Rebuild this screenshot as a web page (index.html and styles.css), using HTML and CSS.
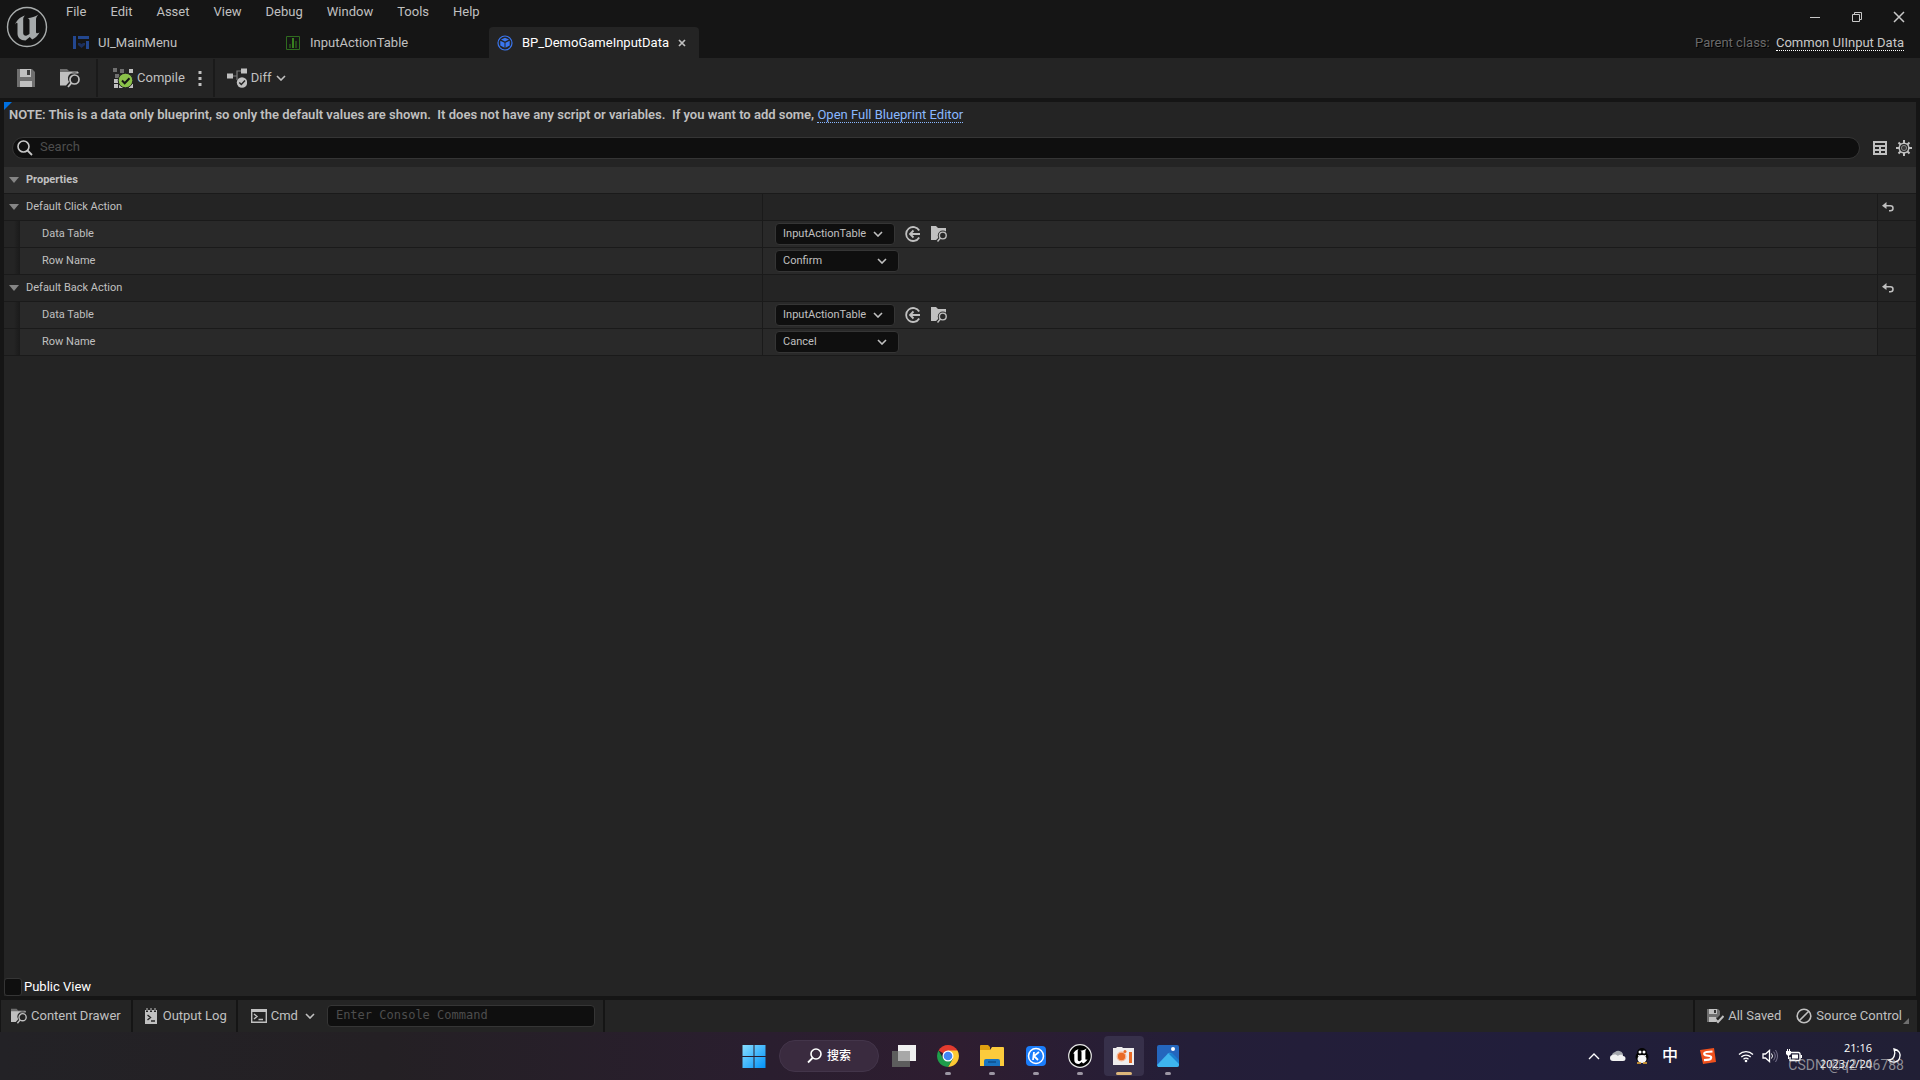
FILE: index.html
```html
<!DOCTYPE html>
<html lang="en">
<head>
  <meta charset="UTF-8">
  <meta name="viewport" content="width=device-width, initial-scale=1.0">
  <title>BP_DemoGameInputData</title>
  <link rel="stylesheet" href="styles.css">
</head>
<body>
  <!-- Shared icons -->
  <svg class="sprite" aria-hidden="true">
    <symbol id="chevron" viewBox="0 0 10 6"><path d="M1 1l4 4 4-4" fill="none" stroke="currentColor" stroke-width="1.6"/></symbol>
    <symbol id="browse" viewBox="0 0 20 20">
      <path d="M0 1h7l2 2h9v3H0z" fill="#6f6f6f"/>
      <path d="M0 4h18.500v1.500a6.500 6.500 0 0 0-9.500 8.500L6 17.500H0z" fill="#c0c0c0"/>
      <circle cx="14.500" cy="11.500" r="4.500" fill="none" stroke="#c0c0c0" stroke-width="1.700"/>
      <path d="M11.500 14.800L8 19" stroke="#c0c0c0" stroke-width="1.800"/>
    </symbol>
    <symbol id="browse-flat" viewBox="0 0 16 16">
      <path d="M0 0h5l2 2h8v12H0z" fill="#c0c0c0"/>
      <path d="M9.500 12.500L6 16" stroke="#292929" stroke-width="4"/>
      <circle cx="11.800" cy="9.500" r="5" fill="#292929"/>
      <path d="M12 12h4v4H8z" fill="#292929"/>
      <circle cx="11.800" cy="9.500" r="3.400" fill="none" stroke="#c0c0c0" stroke-width="1.400"/>
      <path d="M9.500 12L6.500 15.500" stroke="#c0c0c0" stroke-width="1.500"/>
    </symbol>
    <symbol id="use-asset" viewBox="0 0 16 16">
      <path d="M14.200 4.500a7 7 0 1 0 0 7M15 8H5M8.500 4.500L5 8l3.500 3.500" fill="none" stroke="#c0c0c0" stroke-width="1.800"/>
    </symbol>
    <symbol id="undo" viewBox="0 0 12 10">
      <path d="M4.500 0L0 3.800l4.500 3.200z" fill="#c0c0c0"/>
      <path d="M2 3.700h6.500a2.400 2.400 0 0 1 0 5H7" fill="none" stroke="#c0c0c0" stroke-width="1.500"/>
    </symbol>
    <symbol id="unreal-u" viewBox="0 0 40 40">
      <path d="M8 17.500C10 12.500 14 9.500 18 8.500c-1.500 1.300-1.800 2.500-1.800 4V26c0 1.800 1.200 2.700 2.700 2.700 1.300 0 2.500-.8 3.600-1.900V13.500c0-1.300-.6-2-2-2.300 4-.4 7.800-1.500 11-3.700-1.700 1.800-2.500 3.200-2.500 5.200V25c0 1.500 1.600 1.600 3.500.4-1.800 3.500-4.200 5.600-7.300 7L22.800 30l-4.300 3.500c-5.200-.2-8-2.900-8-7V17c0-1.600-1-1.600-2.500.5z"/>
    </symbol>
  </svg>

  <div class="editor">
    <header class="titlebar">
      <div class="logo">
        <svg width="42" height="42" viewBox="0 0 42 42">
          <circle cx="21" cy="21" r="19.500" fill="#141414" stroke="#a8acac" stroke-width="1.400"/>
          <use href="#unreal-u" x="1" y="1" width="40" height="40" fill="#a5a9aa"/>
        </svg>
      </div>
      <div class="titlebar-main">
        <div class="titlebar-row">
          <nav class="menu">
            <button>File</button>
            <button>Edit</button>
            <button>Asset</button>
            <button>View</button>
            <button>Debug</button>
            <button>Window</button>
            <button>Tools</button>
            <button>Help</button>
          </nav>
          <div class="window-controls">
            <button aria-label="Minimize"><svg width="12" height="12"><path d="M1 6.500h10" stroke="#c8c8c8"/></svg></button>
            <button aria-label="Restore"><svg width="12" height="12"><path d="M1.500 3.500h7v7h-7zM3.500 3V1.500h7v7H9" fill="none" stroke="#c8c8c8"/></svg></button>
            <button aria-label="Close"><svg width="12" height="12"><path d="M1 1l10 10M11 1L1 11" stroke="#c8c8c8" stroke-width="1.500"/></svg></button>
          </div>
        </div>
        <div class="tab-row">
          <div class="tabs">
            <div class="tab">
              <svg width="16" height="16"><path d="M0 1h3v13H0zM5 1h11v3H5zM13 6h3v8h-3z" fill="#23478f"/><path d="M5 8h2l1.500 1L10 8h2v2l-3.500 3L5 10z" fill="#1c2f5c"/></svg>
              <button class="tab-title">UI_MainMenu</button>
            </div>
            <div class="tab">
              <svg width="16" height="16"><path d="M1.500 1.500h13v13h-13z" fill="none" stroke="#2f6b1f"/><path d="M7 3h2v10H7z" fill="#38801f"/><path d="M4 9h2v4H4zM10 6h2v7h-2z" fill="#234a18"/></svg>
              <button class="tab-title">InputActionTable</button>
            </div>
            <div class="tab active">
              <svg width="16" height="16"><circle cx="8" cy="8" r="7" fill="none" stroke="#3a76f0" stroke-width="1.200"/><path d="M8 2.800l4 1.800-4 1.900-4-1.900zM3.300 5.700l4.200 2v5.100l-4.200-2.300zM12.700 5.700l-4.200 2v5.100l4.200-2.300z" fill="#3a76f0"/></svg>
              <button class="tab-title">BP_DemoGameInputData</button>
              <button class="tab-close" aria-label="Close tab"><svg width="8" height="8"><path d="M1 1l6 6M7 1L1 7" stroke="#c0c0c0" stroke-width="1.700"/></svg></button>
            </div>
          </div>
          <div class="parent-class"><span>Parent class:</span> <a href="#">Common UIInput Data</a></div>
        </div>
      </div>
    </header>

    <div class="toolbar">
      <div class="tool-group tool-files">
        <button aria-label="Save">
          <svg width="18" height="18"><path d="M0 0h15l3 3v15H0z" fill="#6f6f6f"/><path d="M3 0h11v8H3zM3 12h12v6H3z" fill="#c0c0c0"/><path d="M10 1h3v5h-3z" fill="#3c3c3c"/></svg>
        </button>
        <button aria-label="Browse to asset"><svg width="20" height="20"><use href="#browse"/></svg></button>
      </div>
      <div class="tool-group tool-compile">
        <button>
          <svg width="20" height="20">
            <path d="M0 0h4v4H0zM7 1h4v4H7zM2 6h4v4H2z" fill="#6f6f6f"/>
            <path d="M16 1h4v4h-4zM1 11h4v4H1zM1 16h4v4H1zM16 16h4v4h-4zM6 16h4v4H6z" fill="#c0c0c0"/>
            <circle cx="12.500" cy="12.500" r="7.300" fill="#8bc24a" stroke="#242424"/>
            <path d="M9 12.500l2.700 2.700 4.800-5" fill="none" stroke="#151515" stroke-width="2"/>
          </svg>
          <span>Compile</span>
        </button>
        <button class="more" aria-label="Compile options"><svg width="4" height="16" fill="#c0c0c0"><path d="M.5 1h3v3h-3zM.5 7h3v3h-3zM.5 13h3v3h-3z"/></svg></button>
      </div>
      <div class="tool-group tool-diff">
        <button>
          <svg width="20" height="20">
            <path d="M5 8h5M14 3h-4v9" fill="none" stroke="#7a7a7a" stroke-width="1.200"/>
            <path d="M0 5.500h6v5H0zM14 .500h6v5h-6z" fill="#c0c0c0"/>
            <circle cx="15" cy="14.500" r="5.200" fill="#c0c0c0"/>
            <path d="M12.300 14.500l2 2 3.700-4" fill="none" stroke="#242424" stroke-width="1.500"/>
          </svg>
          <span>Diff</span>
          <svg width="10" height="6"><use href="#chevron"/></svg>
        </button>
      </div>
    </div>

    <main class="panel">
      <p class="note">NOTE: This is a data only blueprint, so only the default values are shown.&nbsp; It does not have any script or variables.&nbsp; If you want to add some, <a href="#">Open Full Blueprint Editor</a></p>

      <div class="search-row">
        <label class="search">
          <svg width="16" height="16"><path d="M10.500 10.500l4.500 4.500" stroke="#c8c8c8" stroke-width="1.800"/><circle cx="6.500" cy="6.500" r="5.500" fill="none" stroke="#c8c8c8" stroke-width="1.600"/></svg>
          <input type="text" placeholder="Search" aria-label="Search">
        </label>
        <button aria-label="Property matrix"><svg width="14" height="14"><path d="M0 0h14v14H0z" fill="#c0c0c0"/><path d="M2 2h10v2H2zM2 6h4v2H2zM8 6h4v2H8zM2 10h4v2H2zM8 10h4v2H8z" fill="#242424"/></svg></button>
        <button aria-label="Settings"><svg width="16" height="16"><g stroke="#c0c0c0" stroke-width="2"><path d="M8 0v16M0 8h16M2.500 2.500l11 11M13.500 2.500l-11 11"/></g><circle cx="8" cy="8" r="4.800" fill="#242424" stroke="#c0c0c0" stroke-width="1.500"/><circle cx="8" cy="8" r="2.600" fill="#3a3a3a" stroke="#858585"/></svg></button>
      </div>

      <section class="properties">
        <div class="category"><i class="arrow"></i>Properties</div>

        <div class="prop">
          <div class="prop-name"><i class="arrow"></i>Default Click Action</div>
          <div class="prop-value"></div>
          <div class="prop-reset"><button aria-label="Reset to default"><svg width="12" height="10"><use href="#undo"/></svg></button></div>
        </div>
        <div class="prop child">
          <div class="prop-name"><label for="click-table">Data Table</label></div>
          <div class="prop-value">
            <div class="combo">
              <select id="click-table"><option>InputActionTable</option></select>
              <svg width="10" height="6"><use href="#chevron"/></svg>
            </div>
            <button aria-label="Use selected asset"><svg width="16" height="16"><use href="#use-asset"/></svg></button>
            <button aria-label="Browse to asset"><svg width="16" height="16"><use href="#browse-flat"/></svg></button>
          </div>
          <div class="prop-reset"></div>
        </div>
        <div class="prop child">
          <div class="prop-name"><label for="click-row">Row Name</label></div>
          <div class="prop-value">
            <div class="combo wide">
              <select id="click-row"><option>Confirm</option></select>
              <svg width="10" height="6"><use href="#chevron"/></svg>
            </div>
          </div>
          <div class="prop-reset"></div>
        </div>

        <div class="prop">
          <div class="prop-name"><i class="arrow"></i>Default Back Action</div>
          <div class="prop-value"></div>
          <div class="prop-reset"><button aria-label="Reset to default"><svg width="12" height="10"><use href="#undo"/></svg></button></div>
        </div>
        <div class="prop child">
          <div class="prop-name"><label for="back-table">Data Table</label></div>
          <div class="prop-value">
            <div class="combo">
              <select id="back-table"><option>InputActionTable</option></select>
              <svg width="10" height="6"><use href="#chevron"/></svg>
            </div>
            <button aria-label="Use selected asset"><svg width="16" height="16"><use href="#use-asset"/></svg></button>
            <button aria-label="Browse to asset"><svg width="16" height="16"><use href="#browse-flat"/></svg></button>
          </div>
          <div class="prop-reset"></div>
        </div>
        <div class="prop child">
          <div class="prop-name"><label for="back-row">Row Name</label></div>
          <div class="prop-value">
            <div class="combo wide">
              <select id="back-row"><option>Cancel</option></select>
              <svg width="10" height="6"><use href="#chevron"/></svg>
            </div>
          </div>
          <div class="prop-reset"></div>
        </div>
      </section>

      <label class="public-view"><input type="checkbox">Public View</label>
    </main>

    <footer class="statusbar">
      <div class="status-group"><button><svg width="16" height="16"><use href="#browse"/></svg>Content Drawer</button></div>
      <div class="status-group">
        <button><svg width="16" height="16"><path d="M2 2h12v14H2z" fill="#c0c0c0"/><path d="M4 0v4M8 0v4M12 0v4" stroke="#242424" stroke-width="2"/><path d="M4 0v3M8 0v3M12 0v3" stroke="#c0c0c0"/><path d="M4.500 7l3 2.500-3 2.500M8 13h4" fill="none" stroke="#242424" stroke-width="1.400"/></svg>Output Log</button>
      </div>
      <div class="status-group console">
        <button><svg width="16" height="14"><path d="M.7 .7h14.600v12.600H.7z" fill="none" stroke="#c0c0c0" stroke-width="1.400"/><path d="M0 0h16v3H0z" fill="#c0c0c0"/><path d="M3 5l3 2.500L3 10M7.500 10.500H12" fill="none" stroke="#c0c0c0" stroke-width="1.400"/></svg>Cmd<svg class="caret" width="10" height="6"><use href="#chevron"/></svg></button>
        <input type="text" placeholder="Enter Console Command" aria-label="Console command">
      </div>
      <div class="status-group spacer"></div>
      <div class="status-group source">
        <button><svg width="17" height="16"><path d="M0 1h11l2 2v4l-4 4v3H0z" fill="#6f6f6f"/><path d="M2 1h8v5H2zM2 9h7v5H2z" fill="#c0c0c0"/><path d="M7 2h2v3H7z" fill="#333"/><path d="M7.500 10.500l3.500 3.500 5.500-6" fill="none" stroke="#c0c0c0" stroke-width="2"/></svg>All Saved</button>
        <button><svg width="16" height="16"><path d="M13 3L3 13" stroke="#c0c0c0" stroke-width="1.600"/><circle cx="8" cy="8" r="6.800" fill="none" stroke="#c0c0c0" stroke-width="1.600"/></svg>Source Control</button>
      </div>
    </footer>
  </div>

  <div class="taskbar">
    <div class="apps">
      <button class="app" aria-label="Start">
        <svg width="24" height="24">
          <defs><linearGradient id="win" x1="0" y1="0" x2="24" y2="24" gradientUnits="userSpaceOnUse"><stop offset="0" stop-color="#8be0ff"/><stop offset="1" stop-color="#0091f8"/></linearGradient></defs>
          <path d="M.5 1h11v11H.5zM12.500 1h11v11h-11zM.5 13h11v11H.5zM12.500 13h11v11h-11z" fill="url(#win)"/>
        </svg>
      </button>
      <button class="search-pill">
        <svg width="16" height="16"><circle cx="9" cy="6" r="5" fill="none" stroke="#fff" stroke-width="1.600"/><path d="M5.500 10L1 14.500" stroke="#fff" stroke-width="1.800"/></svg>
        搜索
      </button>
      <button class="app" aria-label="Task view">
        <svg width="24" height="24"><path d="M6 1h18v16H6z" fill="#f0f0f0"/><path d="M0 7h18v16H0z" fill="#5d5d5d"/><path d="M6 7h12v10H6z" fill="#a8a8a8"/></svg>
      </button>
      <button class="app running" aria-label="Chrome">
        <svg width="24" height="24" viewBox="0 0 24 24">
          <path d="M12 12L2.500 6.500A11 11 0 0 1 21.500 6.500z" fill="#e33b2e"/>
          <path d="M12 6.500h9.500A11 11 0 0 1 12 23l4.800-8.300z" fill="#fcc934"/>
          <path d="M7.300 14.700L2.500 6.500A11 11 0 0 0 12 23l4.800-8.300z" fill="#1e9e4a"/>
          <circle cx="12" cy="12" r="5.500" fill="#fff"/><circle cx="12" cy="12" r="4.300" fill="#4285f4"/>
        </svg>
      </button>
      <button class="app running" aria-label="File Explorer">
        <svg width="24" height="24"><path d="M0 2a1 1 0 0 1 1-1h7l2 2v4H0z" fill="#e0a010"/><path d="M0 6h10l2-3h11a1 1 0 0 1 1 1v18H0z" fill="#fccb3c"/><path d="M4 22v-5a2 2 0 0 1 2-2h12a2 2 0 0 1 2 2v5z" fill="#1974c0"/><path d="M8 18h8" stroke="#0c4f8c" stroke-width="1.500"/></svg>
      </button>
      <button class="app running" aria-label="Kugou">
        <svg width="24" height="24"><rect x="2" y="2" width="20" height="20" rx="4" fill="#1b7dfa"/><circle cx="12" cy="12" r="7.500" fill="none" stroke="#fff" stroke-width="1.500"/><path d="M10 8l-1 8M15 8l-5 4 4 4" fill="none" stroke="#fff" stroke-width="1.800"/></svg>
      </button>
      <button class="app running" aria-label="Unreal Editor">
        <svg width="24" height="24"><circle cx="12" cy="12" r="11.300" fill="#000" stroke="#e8e8e8" stroke-width="1.200"/><use href="#unreal-u" width="24" height="24" fill="#fff"/></svg>
      </button>
      <button class="app running current" aria-label="Screen capture">
        <svg width="24" height="24"><path d="M1 4h3l1-1h5l1 1h11v17H1z" fill="#eeeded"/><circle cx="9.500" cy="12.500" r="4.300" fill="#e96a25" stroke="#f5b493" stroke-width="1.300"/><circle cx="13" cy="7.500" r="1.500" fill="#e96a25"/><path d="M17 8h3v11h-3z" fill="#e96a25"/></svg>
      </button>
      <button class="app running" aria-label="Photos">
        <svg width="24" height="24"><rect x="1" y="1" width="22" height="22" rx="2" fill="#2466bd"/><path d="M1 21L12 9.500a2.500 2.500 0 0 1 3.500 0L23 17v4a2 2 0 0 1-2 2H2z" fill="#3eb5ee"/><path d="M12.500 9.500L23 20v-4l-7-7z" fill="#1a80d0"/><circle cx="17" cy="5" r="2" fill="#fff"/></svg>
      </button>
    </div>

    <div class="tray">
      <svg width="14" height="8"><path d="M1 7l5-5 5 5" fill="none" stroke="#fff" stroke-width="1.400"/></svg>
      <svg width="16" height="12"><path d="M2 7a4 4 0 0 1 3-5 5 5 0 0 1 8 2v4z" fill="#a4a7ad"/><path d="M3 11a3 3 0 0 1 0-6c2-1 4 0 5 1 2-2 5-1 5 0a2.500 2.500 0 0 1 0 5z" fill="#f2f2f2"/></svg>
      <svg width="16" height="16"><ellipse cx="8" cy="9" rx="6.500" ry="5.500" fill="#050505"/><circle cx="8" cy="5" r="5" fill="#050505"/><ellipse cx="8" cy="11" rx="4.500" ry="4" fill="#f6f6f6"/><circle cx="6" cy="4" r="1.500" fill="#fff"/><circle cx="10" cy="4" r="1.500" fill="#fff"/><path d="M4 7.500q4 2 8 0" stroke="#fff" fill="none"/><path d="M3 15h4M9 15h4" stroke="#efae32" stroke-width="1.500"/></svg>
      <span class="ime">中</span>
      <svg class="sogou" width="16" height="16"><path d="M0 2l14-2 2 14-13 2z" fill="#f0511d"/><path d="M12.500 3.500l-6 .5c-3 .5-3 3 0 3.500l3 .500c2.500.5 2 3.500-.5 3.700l-5 .500" fill="none" stroke="#fff" stroke-width="2.200"/></svg>
      <svg class="wifi" width="16" height="14"><g fill="none" stroke="#fff" stroke-width="1.300"><path d="M1 5.500a10 10 0 0 1 14 0M3.300 8a6.800 6.800 0 0 1 9.400 0M5.500 10.300a3.700 3.700 0 0 1 5 0"/></g><circle cx="8" cy="12" r="1.300" fill="#fff"/></svg>
      <svg width="16" height="14"><path d="M1 5h2.500L7.500 1.500v11L3.500 9H1z" fill="none" stroke="#fff" stroke-width="1.300"/><path d="M9.500 4.500q2 2.500 0 5" fill="none" stroke="#fff"/><path d="M11.500 2.700q3.500 4.300 0 8.600M13.500 1q4 6 0 12" fill="none" stroke="#77728c"/></svg>
      <svg width="16" height="14"><path d="M5 3.500h7.500a1.500 1.500 0 0 1 1.500 1.500v5a1.500 1.500 0 0 1-1.500 1.500H4V8" fill="none" stroke="#fff" stroke-width="1.400"/><path d="M6 5.500h6v4H6zM14.500 6H16v3h-1.500zM0 2h5v3L3.500 6.500h-2L0 5zM1 0h1v2H1zM3 0h1v2H3zM2 6h1v4H2z" fill="#fff"/></svg>
      <div class="clock"><span>21:16</span><span>2023/2/20</span></div>
      <svg class="moon" width="16" height="16"><path d="M8 1c5 1 7.500 5 5.500 9.500-1.500 4-7.500 5-11 1.500C8 12 10 6 8 1z" fill="none" stroke="#fff" stroke-width="1.300"/></svg>
    </div>
    <div class="watermark">CSDN @q2146788</div>
  </div>
</body>
</html>
```

FILE: styles.css
```css
* {
  box-sizing: border-box;
}
body {
  margin: 0;
  height: 100vh;
  display: flex;
  flex-direction: column;
  background: #151515;
  color: #c0c0c0;
  font-family: Roboto, "Noto Sans CJK SC", sans-serif;
  font-size: 13px;
  line-height: 16px;
}
button {
  display: flex;
  align-items: center;
  padding: 0;
  border: none;
  background: none;
  color: inherit;
  font: inherit;
  white-space: nowrap;
}
input,
select {
  color: inherit;
  font: inherit;
}
svg {
  display: block;
  flex: none;
}
.sprite {
  position: absolute;
  width: 0;
  height: 0;
}
.editor {
  flex: 1;
  min-height: 0;
  display: flex;
  flex-direction: column;
}

/* Title bar */
.titlebar {
  display: flex;
}
.logo {
  width: 65px;
  padding: 6px;
}
.titlebar-main {
  flex: 1;
}
.titlebar-row {
  display: flex;
  justify-content: space-between;
  height: 27px;
}
.menu {
  display: flex;
  align-items: flex-start;
  gap: 24px;
  padding: 4px 1px;
}
.window-controls {
  display: flex;
  padding-top: 7px;
}
.window-controls button {
  width: 42px;
  height: 20px;
  justify-content: center;
}
.tab-row {
  display: flex;
  justify-content: space-between;
  align-items: center;
}
.tabs {
  display: flex;
  gap: 2px;
}
.tab {
  display: flex;
  align-items: center;
  gap: 9px;
  width: 210px;
  height: 31px;
  padding: 0 8px;
  border-radius: 4px 4px 0 0;
}
.tab.active {
  background: #242424;
  color: #fff;
}
.parent-class {
  padding-right: 16px;
}
.parent-class span {
  margin-right: 3px;
  color: #6a6a6a;
  text-shadow: 1px 1px 0 #000;
}
.parent-class a {
  color: #c8c8c8;
  text-decoration: none;
  border-bottom: 1px dotted #fff;
}

/* Toolbar */
.toolbar {
  display: flex;
  height: 40px;
  margin-bottom: 4px;
  background: #242424;
}
.tool-group {
  display: flex;
  align-items: center;
  margin: 1px 0;
}
.tool-group + .tool-group {
  border-left: 2px solid #1a1a1a;
}
.tool-group button {
  gap: 4px;
}
.tool-files {
  gap: 25px;
  padding: 0 16px 0 17px;
}
.tool-compile {
  gap: 13px;
  padding: 0 11px 0 15px;
}
.tool-diff {
  padding-left: 12px;
}

/* Details panel */
.panel {
  flex: 1;
  min-height: 0;
  position: relative;
  display: flex;
  flex-direction: column;
  margin: 0 4px 4px;
  background: #242424;
}
.panel::before {
  content: "";
  position: absolute;
  left: 0;
  top: 0;
  border-top: 8px solid #0070e0;
  border-right: 8px solid transparent;
}
.note {
  margin: 0;
  padding: 5px 5px 14px;
  font-weight: 600;
}
.note a {
  color: #8ab8ff;
  font-weight: normal;
  text-decoration: none;
  border-bottom: 1px dotted #8ab8ff;
}
.search-row {
  display: flex;
  align-items: center;
  gap: 9px;
  padding: 0 4px 8px 8px;
}
.search {
  flex: 1;
  display: flex;
  align-items: center;
  gap: 7px;
  height: 22px;
  margin-right: 4px;
  padding: 0 4px;
  border: 1px solid #353535;
  border-radius: 11px;
  background: #0f0f0f;
}
.search input {
  flex: 1;
  padding: 0 0 2px;
  border: none;
  background: none;
}
input::placeholder {
  color: #4d4d4d;
  opacity: 1;
}
.properties {
  font-size: 11px;
}
.category {
  display: flex;
  align-items: center;
  height: 27px;
  padding-left: 5px;
  background: #2f2f2f;
  border-bottom: 1px solid #1a1a1a;
  font-weight: bold;
}
.arrow {
  width: 10px;
  margin-right: 7px;
  border: 5px solid transparent;
  border-top: 6px solid #858585;
  border-bottom: none;
}
.prop {
  display: grid;
  grid-template-columns: 17fr 25fr 39px;
  height: 27px;
  border-bottom: 1px solid #1a1a1a;
}
.prop > div {
  display: flex;
  align-items: center;
}
.prop-name {
  padding-left: 5px;
}
.prop-value {
  gap: 10px;
  padding-left: 12px;
  border-left: 1px solid #1a1a1a;
}
.prop-reset {
  padding-left: 4px;
  border-left: 1px solid #1a1a1a;
}
.child {
  background: linear-gradient(to right, #242424 10px, #1a1a1a 16px, #292929 16px);
}
.child .prop-name {
  padding-left: 38px;
}
.child .prop-reset {
  background: #242424;
}
.combo {
  position: relative;
  width: 120px;
}
.combo.wide {
  width: 124px;
}
.combo select {
  display: block;
  appearance: none;
  width: 100%;
  height: 22px;
  padding: 0 7px;
  border: 1px solid #353535;
  border-radius: 4px;
  background: #0f0f0f;
}
.combo svg {
  position: absolute;
  right: 12px;
  top: 8px;
  pointer-events: none;
}
.public-view {
  display: flex;
  align-items: center;
  gap: 2px;
  margin-top: auto;
  color: #fff;
}
.public-view input {
  appearance: none;
  width: 18px;
  height: 18px;
  margin: 0;
  border: 1px solid #353535;
  border-radius: 3px;
  background: #0f0f0f;
}

/* Status bar */
.statusbar {
  display: flex;
  gap: 2px;
  height: 32px;
  padding: 0 3px 0 1px;
}
.status-group {
  display: flex;
  align-items: center;
  padding: 0 10px;
  background: #242424;
}
.status-group + .status-group {
  padding-right: 9px;
}
.status-group button {
  gap: 4px;
}
.status-group .caret {
  margin-left: 3px;
}
.status-group.console {
  gap: 12px;
  padding: 0 8px 0 13px;
}
.console input {
  width: 268px;
  height: 22px;
  padding: 0 8px 2px;
  border: 1px solid #353535;
  border-radius: 4px;
  background: #0f0f0f;
  font-family: "DejaVu Sans Mono", monospace;
  font-size: 12px;
}
.spacer {
  flex: 1;
}
.status-group.source {
  position: relative;
  gap: 15px;
  padding: 0 15px 0 12px;
}
.source::after {
  content: "";
  position: absolute;
  right: 8px;
  bottom: 8px;
  border-bottom: 6px solid #6f6f6f;
  border-left: 6px solid transparent;
}

/* Windows taskbar */
.taskbar {
  position: relative;
  display: grid;
  grid-template-columns: 1fr auto 1fr;
  align-items: center;
  height: 48px;
  background: linear-gradient(to right, #232226, #242024 20%, #2a1e2f 40%, #2e1d30 50%, #241e38 62%, #211e3b 80%, #211f35);
  color: #fff;
}
.apps {
  grid-column: 2;
  display: flex;
  align-items: center;
  gap: 4px;
  padding-left: 2px;
}
.app {
  position: relative;
  width: 40px;
  height: 40px;
  justify-content: center;
  border-radius: 4px;
}
.running::after {
  content: "";
  position: absolute;
  left: 50%;
  bottom: 1px;
  width: 6px;
  height: 3px;
  border-radius: 2px;
  background: #9c96a3;
  transform: translateX(-50%);
}
.current {
  background: #37304a;
}
.current::after {
  width: 16px;
  background: #dcb67a;
}
.search-pill {
  justify-content: center;
  gap: 4px;
  width: 100px;
  height: 32px;
  margin: 0 1px;
  border: 1px solid #43354a;
  border-radius: 16px;
  background: #3a2b3f;
  font-size: 12px;
  font-weight: 500;
}
.tray {
  display: flex;
  justify-content: flex-end;
  align-items: center;
  gap: 8px;
  padding-right: 18px;
}
.ime {
  margin-left: 4px;
  font-size: 16px;
  font-weight: 500;
}
.sogou {
  margin: 0 14px;
}
.clock {
  display: flex;
  flex-direction: column;
  align-items: flex-end;
  width: 62px;
  font-family: "Open Sans", sans-serif;
  font-size: 11px;
}
.moon {
  margin-left: 6px;
}
.watermark {
  position: absolute;
  right: 16px;
  bottom: 7px;
  color: rgba(215, 215, 215, 0.6);
  font-size: 14px;
  pointer-events: none;
}
```
